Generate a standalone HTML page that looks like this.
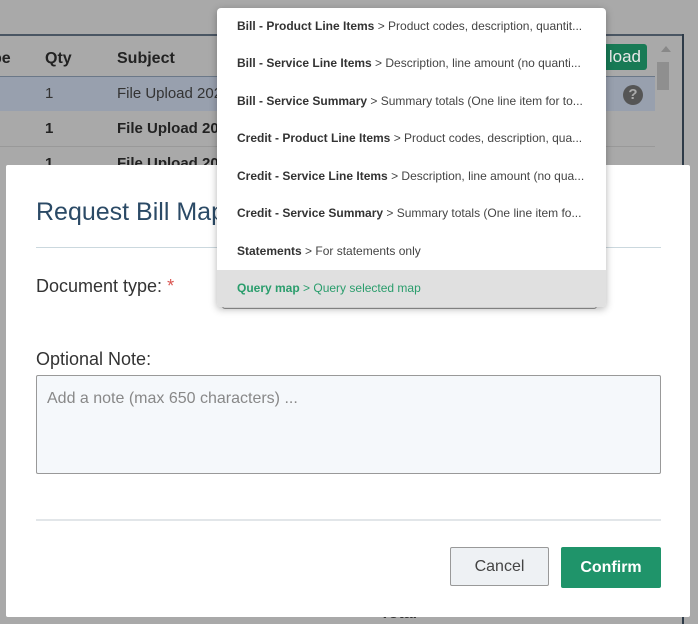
<!DOCTYPE html>
<html><head><style>
body{margin:0;width:698px;height:623px;overflow:hidden;background:#a9a9a9;font-family:"Liberation Sans",sans-serif;position:relative}
.a{position:absolute}
.hd{font-weight:bold;font-size:16px;color:#222}
.dd div{height:37.5px;line-height:37.5px;padding-left:20px;font-size:12px;color:#444;white-space:nowrap;overflow:hidden;width:369px;letter-spacing:0}
.dd b{color:#333}
</style></head><body>
<div class="a" style="left:0;top:34px;width:684px;height:2px;background:#4a5663"></div>
<div class="a" style="left:682px;top:34px;width:2px;height:590px;background:#2e3b48"></div>
<div class="a" style="left:0;top:76px;width:655px;height:35px;background:#98a0ae"></div>
<div class="a" style="left:0;top:76px;width:655px;height:1px;background:#6b7888"></div>
<div class="a" style="left:0;top:146px;width:655px;height:1px;background:#999"></div>
<div class="a hd" style="left:-8px;top:50px">pe</div>
<div class="a hd" style="left:45px;top:50px">Qty</div>
<div class="a hd" style="left:117px;top:50px">Subject</div>
<div class="a" style="left:45px;top:85px;font-size:15px;color:#333">1</div>
<div class="a" style="left:117px;top:85px;font-size:15px;color:#333">File Upload 202</div>
<div class="a" style="left:45px;top:120px;font-size:15px;color:#222;font-weight:bold">1</div>
<div class="a" style="left:117px;top:120px;font-size:15px;color:#222;font-weight:bold">File Upload 202</div>
<div class="a" style="left:45px;top:155px;font-size:15px;color:#222;font-weight:bold">1</div>
<div class="a" style="left:117px;top:155px;font-size:15px;color:#222;font-weight:bold">File Upload 202</div>
<div class="a" style="left:580px;top:44px;width:67px;height:26px;background:#187a55;border-radius:3px;color:#e8e8e8;font-size:17px;line-height:26px;text-align:right;padding-right:6px;box-sizing:border-box">load</div>
<div class="a" style="left:623px;top:85px;width:20px;height:20px;border-radius:50%;background:#555;color:#aaa;font-size:15px;font-weight:bold;text-align:center;line-height:20px">?</div>
<div class="a" style="left:657px;top:62px;width:12px;height:28px;background:#8f8f8f"></div>
<div class="a" style="left:661px;top:46px;width:0;height:0;border-left:5px solid transparent;border-right:5px solid transparent;border-bottom:6px solid #888"></div>
<div class="a" style="left:380px;top:605px;font-size:16px;font-weight:bold;color:#333">Total</div>
<div class="a" style="left:6px;top:165px;width:684px;height:452px;background:#fff;border-radius:2px"></div>
<div class="a" style="left:36px;top:198px;font-size:25px;color:#2b4a66">Request Bill Map</div>
<div class="a" style="left:36px;top:247px;width:625px;height:1px;background:#cbd8de"></div>
<div class="a" style="left:36px;top:276px;font-size:18px;color:#333">Document type: <span style="color:#d9534f">*</span></div>
<div class="a" style="left:222px;top:285px;width:375px;height:24px;border:1px solid #999;border-radius:3px;box-sizing:border-box"></div>
<div class="a" style="left:36px;top:349px;font-size:18px;color:#333">Optional Note:</div>
<div class="a" style="left:36px;top:375px;width:625px;height:99px;background:#f5f8fb;border:1px solid #999;border-radius:2px;box-sizing:border-box;padding:14px 10px;font-size:16px;color:#888">Add a note (max 650 characters) ...</div>
<div class="a" style="left:36px;top:519px;width:625px;height:2px;background:#e2e6e9"></div>
<div class="a" style="left:450px;top:547px;width:99px;height:39px;background:#eef1f4;border:1px solid #999;border-radius:2px;box-sizing:border-box;text-align:center;line-height:37px;font-size:16px;color:#444">Cancel</div>
<div class="a" style="left:561px;top:547px;width:100px;height:41px;background:#1f946a;border-radius:2px;text-align:center;line-height:41px;font-size:16px;color:#fff;font-weight:bold">Confirm</div>
<div class="a dd" style="left:217px;top:8px;width:389px;height:299px;background:#fff;border-radius:4px;box-shadow:0 2px 8px rgba(0,0,0,.3);overflow:hidden">
<div style="height:37px"><b>Bill - Product Line Items</b> &gt; Product codes, description, quantit...</div>
<div><b>Bill - Service Line Items</b> &gt; Description, line amount (no quanti...</div>
<div><b>Bill - Service Summary</b> &gt; Summary totals (One line item for to...</div>
<div><b>Credit - Product Line Items</b> &gt; Product codes, description, qua...</div>
<div><b>Credit - Service Line Items</b> &gt; Description, line amount (no qua...</div>
<div><b>Credit - Service Summary</b> &gt; Summary totals (One line item fo...</div>
<div><b>Statements</b> &gt; For statements only</div>
<div style="background:#e0e0e0;color:#2a9d6c"><b style="color:#2a9d6c">Query map</b> &gt; Query selected map</div>
</div>
</body></html>
